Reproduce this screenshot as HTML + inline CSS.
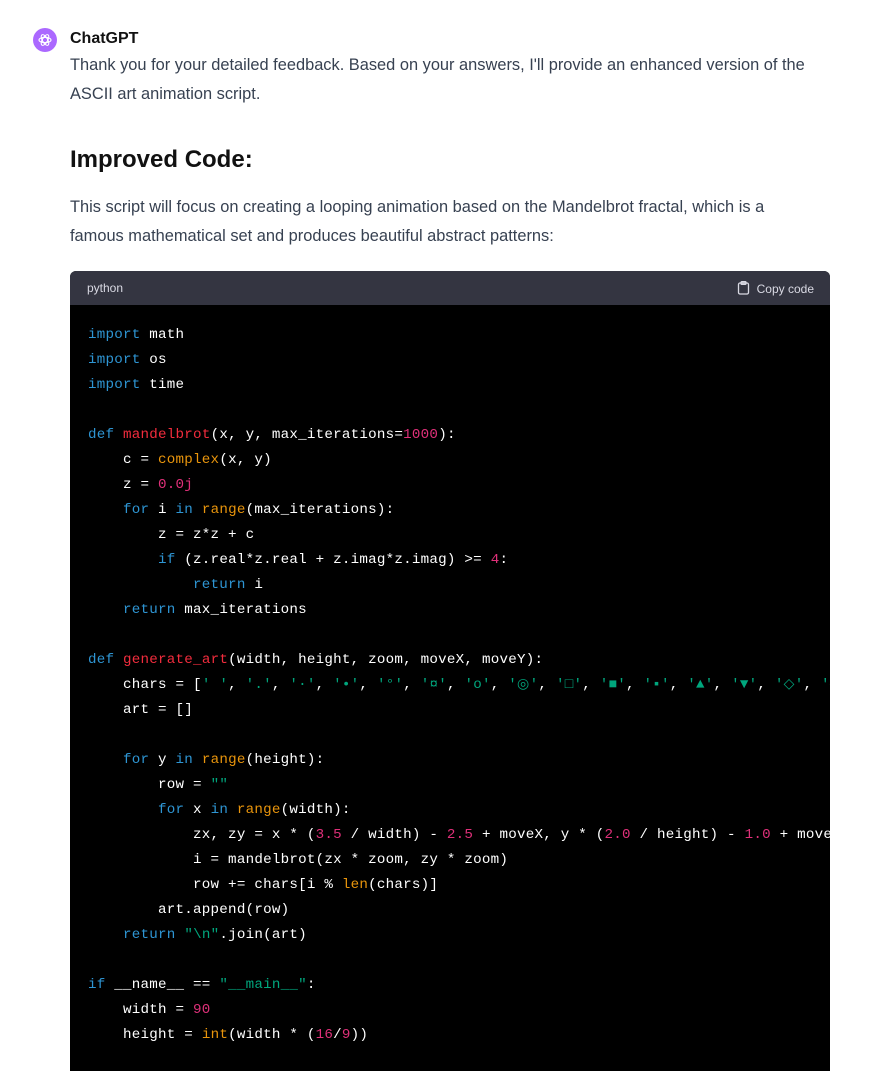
<!DOCTYPE html>
<html><head><meta charset="utf-8"><style>
body{margin:0;background:#fff;width:873px;height:1063px;overflow:hidden;font-family:"Liberation Sans",sans-serif;color:#374151;position:relative}
.av{position:absolute;left:33px;top:28px;width:24px;height:24px;border-radius:50%;background:#ab68ff;display:flex;align-items:center;justify-content:center}
.name{position:absolute;left:70px;top:30px;font-weight:bold;font-size:16px;color:#111}
.p{position:absolute;left:70px;font-size:16.4px;line-height:29px;width:745px;color:#374151}
h2{position:absolute;left:70px;top:146px;margin:0;font-size:24px;font-weight:bold;color:#111}
.code{position:absolute;left:70px;top:271px;width:760px;height:800px;background:#000;border-radius:6px 6px 0 0;overflow:hidden}
.hd{height:34px;background:#343541;color:#d9d9e3;font-size:12px;display:flex;align-items:center;justify-content:space-between;padding:0 16px 0 17px}
pre{margin:0;padding:18px 0 0 18px;font-family:"Liberation Mono",monospace;font-size:14.2px;letter-spacing:0.24px;line-height:25px;color:#fff;white-space:pre}
.k{color:#2e95d3}.f{color:#f22c3d}.n{color:#df3079}.s{color:#00a67d}.b{color:#e9950c}
</style></head><body>
<div class="av"><svg width="16" height="16" viewBox="0 0 24 24" fill="none" stroke="#fff" stroke-width="1.6"><circle cx="12" cy="12" r="4"/><ellipse cx="12" cy="12" rx="9" ry="4"/><ellipse cx="12" cy="12" rx="9" ry="4" transform="rotate(60 12 12)"/><ellipse cx="12" cy="12" rx="9" ry="4" transform="rotate(120 12 12)"/></svg></div>
<div class="name">ChatGPT</div>
<div class="p" style="top:51px">Thank you for your detailed feedback. Based on your answers, I'll provide an enhanced version of the ASCII art animation script.</div>
<h2>Improved Code:</h2>
<div class="p" style="top:193px">This script will focus on creating a looping animation based on the Mandelbrot fractal, which is a famous mathematical set and produces beautiful abstract patterns:</div>
<div class="code"><div class="hd"><span>python</span><span><svg width="13" height="14" viewBox="0 0 13 14" fill="none" stroke="#d9d9e3" stroke-width="1.3" style="vertical-align:-2px;margin-right:7px"><rect x="1.5" y="2" width="10" height="11" rx="1.5"/><rect x="4" y="0.7" width="5" height="2.6" rx="0.8"/></svg>Copy code</span></div>
<pre><span class="k">import</span> math
<span class="k">import</span> os
<span class="k">import</span> time

<span class="k">def</span> <span class="f">mandelbrot</span>(x, y, max_iterations=<span class="n">1000</span>):
    c = <span class="b">complex</span>(x, y)
    z = <span class="n">0.0j</span>
    <span class="k">for</span> i <span class="k">in</span> <span class="b">range</span>(max_iterations):
        z = z*z + c
        <span class="k">if</span> (z.real*z.real + z.imag*z.imag) &gt;= <span class="n">4</span>:
            <span class="k">return</span> i
    <span class="k">return</span> max_iterations

<span class="k">def</span> <span class="f">generate_art</span>(width, height, zoom, moveX, moveY):
    chars = [<span class="s">' '</span>, <span class="s">'.'</span>, <span class="s">'·'</span>, <span class="s">'•'</span>, <span class="s">'°'</span>, <span class="s">'¤'</span>, <span class="s">'o'</span>, <span class="s">'◎'</span>, <span class="s">'□'</span>, <span class="s">'■'</span>, <span class="s">'▪'</span>, <span class="s">'▲'</span>, <span class="s">'▼'</span>, <span class="s">'◇'</span>, <span class="s">'◆'</span>]
    art = []

    <span class="k">for</span> y <span class="k">in</span> <span class="b">range</span>(height):
        row = <span class="s">""</span>
        <span class="k">for</span> x <span class="k">in</span> <span class="b">range</span>(width):
            zx, zy = x * (<span class="n">3.5</span> / width) - <span class="n">2.5</span> + moveX, y * (<span class="n">2.0</span> / height) - <span class="n">1.0</span> + moveY
            i = mandelbrot(zx * zoom, zy * zoom)
            row += chars[i % <span class="b">len</span>(chars)]
        art.append(row)
    <span class="k">return</span> <span class="s">"\n"</span>.join(art)

<span class="k">if</span> __name__ == <span class="s">"__main__"</span>:
    width = <span class="n">90</span>
    height = <span class="b">int</span>(width * (<span class="n">16</span>/<span class="n">9</span>))</pre></div>
</body></html>
